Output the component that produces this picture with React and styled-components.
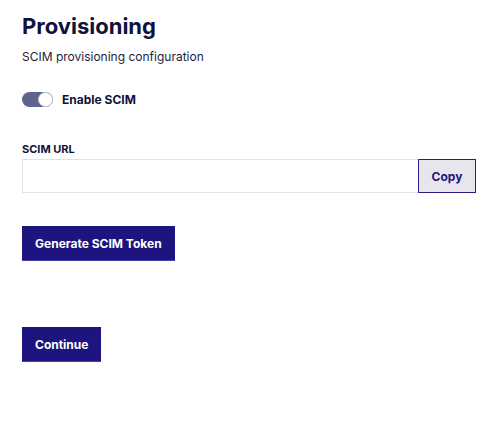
import React, { useState } from 'react';
import styled, { createGlobalStyle } from 'styled-components';

const Global = createGlobalStyle`
  body {
    margin: 0;
    background: #ffffff;
    font-family: Inter, "Noto Sans", sans-serif;
    color: #10123a;
  }
`;

const Page = styled.div`
  padding: 12px 22px;
  display: flex;
  flex-direction: column;
  align-items: flex-start;
`;

const Title = styled.h1`
  margin: 0;
  font-size: 22px;
  font-weight: 700;
  line-height: 28px;
  color: #10123a;
`;

const Subtitle = styled.p`
  margin: 9px 0 0;
  font-size: 12px;
  line-height: 16px;
  color: #1c1e3c;
`;

const ToggleRow = styled.label`
  margin-top: 27px;
  display: flex;
  align-items: center;
  gap: 9px;
  font-size: 12px;
  font-weight: 700;
  cursor: pointer;
`;

const Track = styled.span`
  position: relative;
  width: 31px;
  height: 15px;
  border-radius: 8px;
  background: ${(p) => (p.$on ? '#5c6591' : '#c7c9d6')};
`;

const Knob = styled.span`
  position: absolute;
  top: 0;
  left: ${(p) => (p.$on ? '16px' : '0')};
  width: 13px;
  height: 13px;
  border-radius: 50%;
  background: #ffffff;
  border: 1px solid #c9ccd8;
`;

const Field = styled.div`
  margin-top: 35px;
  display: flex;
  flex-direction: column;
  gap: 3px;
  width: 454px;
`;

const FieldLabel = styled.span`
  font-size: 11px;
  font-weight: 700;
  line-height: 14px;
`;

const InputGroup = styled.div`
  display: flex;
  height: 34px;
`;

const Input = styled.input`
  flex: 1;
  min-width: 0;
  border: 1px solid #e2e2e6;
  border-right: none;
  padding: 0 8px;
  font: inherit;
  font-size: 12px;
  outline: none;
`;

const CopyButton = styled.button`
  width: 58px;
  border: 1px solid #2a1f8a;
  background: #e6e6ec;
  color: #1f1580;
  font: inherit;
  font-size: 12px;
  font-weight: 700;
  cursor: pointer;
`;

const PrimaryButton = styled.button`
  margin-top: ${(p) => p.$top}px;
  height: 35px;
  padding: 0 13px;
  border: none;
  border-bottom: 1px solid #4a3fa6;
  background: #1e1480;
  color: #ffffff;
  font: inherit;
  font-size: 12px;
  font-weight: 700;
  cursor: pointer;
`;

export default function App() {
  const [on, setOn] = useState(true);
  return (
    <>
      <Global />
      <Page>
        <Title>Provisioning</Title>
        <Subtitle>SCIM provisioning configuration</Subtitle>
        <ToggleRow onClick={() => setOn(!on)}>
          <Track $on={on}>
            <Knob $on={on} />
          </Track>
          Enable SCIM
        </ToggleRow>
        <Field>
          <FieldLabel>SCIM URL</FieldLabel>
          <InputGroup>
            <Input readOnly value="" />
            <CopyButton>Copy</CopyButton>
          </InputGroup>
        </Field>
        <PrimaryButton $top={33}>Generate SCIM Token</PrimaryButton>
        <PrimaryButton $top={66}>Continue</PrimaryButton>
      </Page>
    </>
  );
}
